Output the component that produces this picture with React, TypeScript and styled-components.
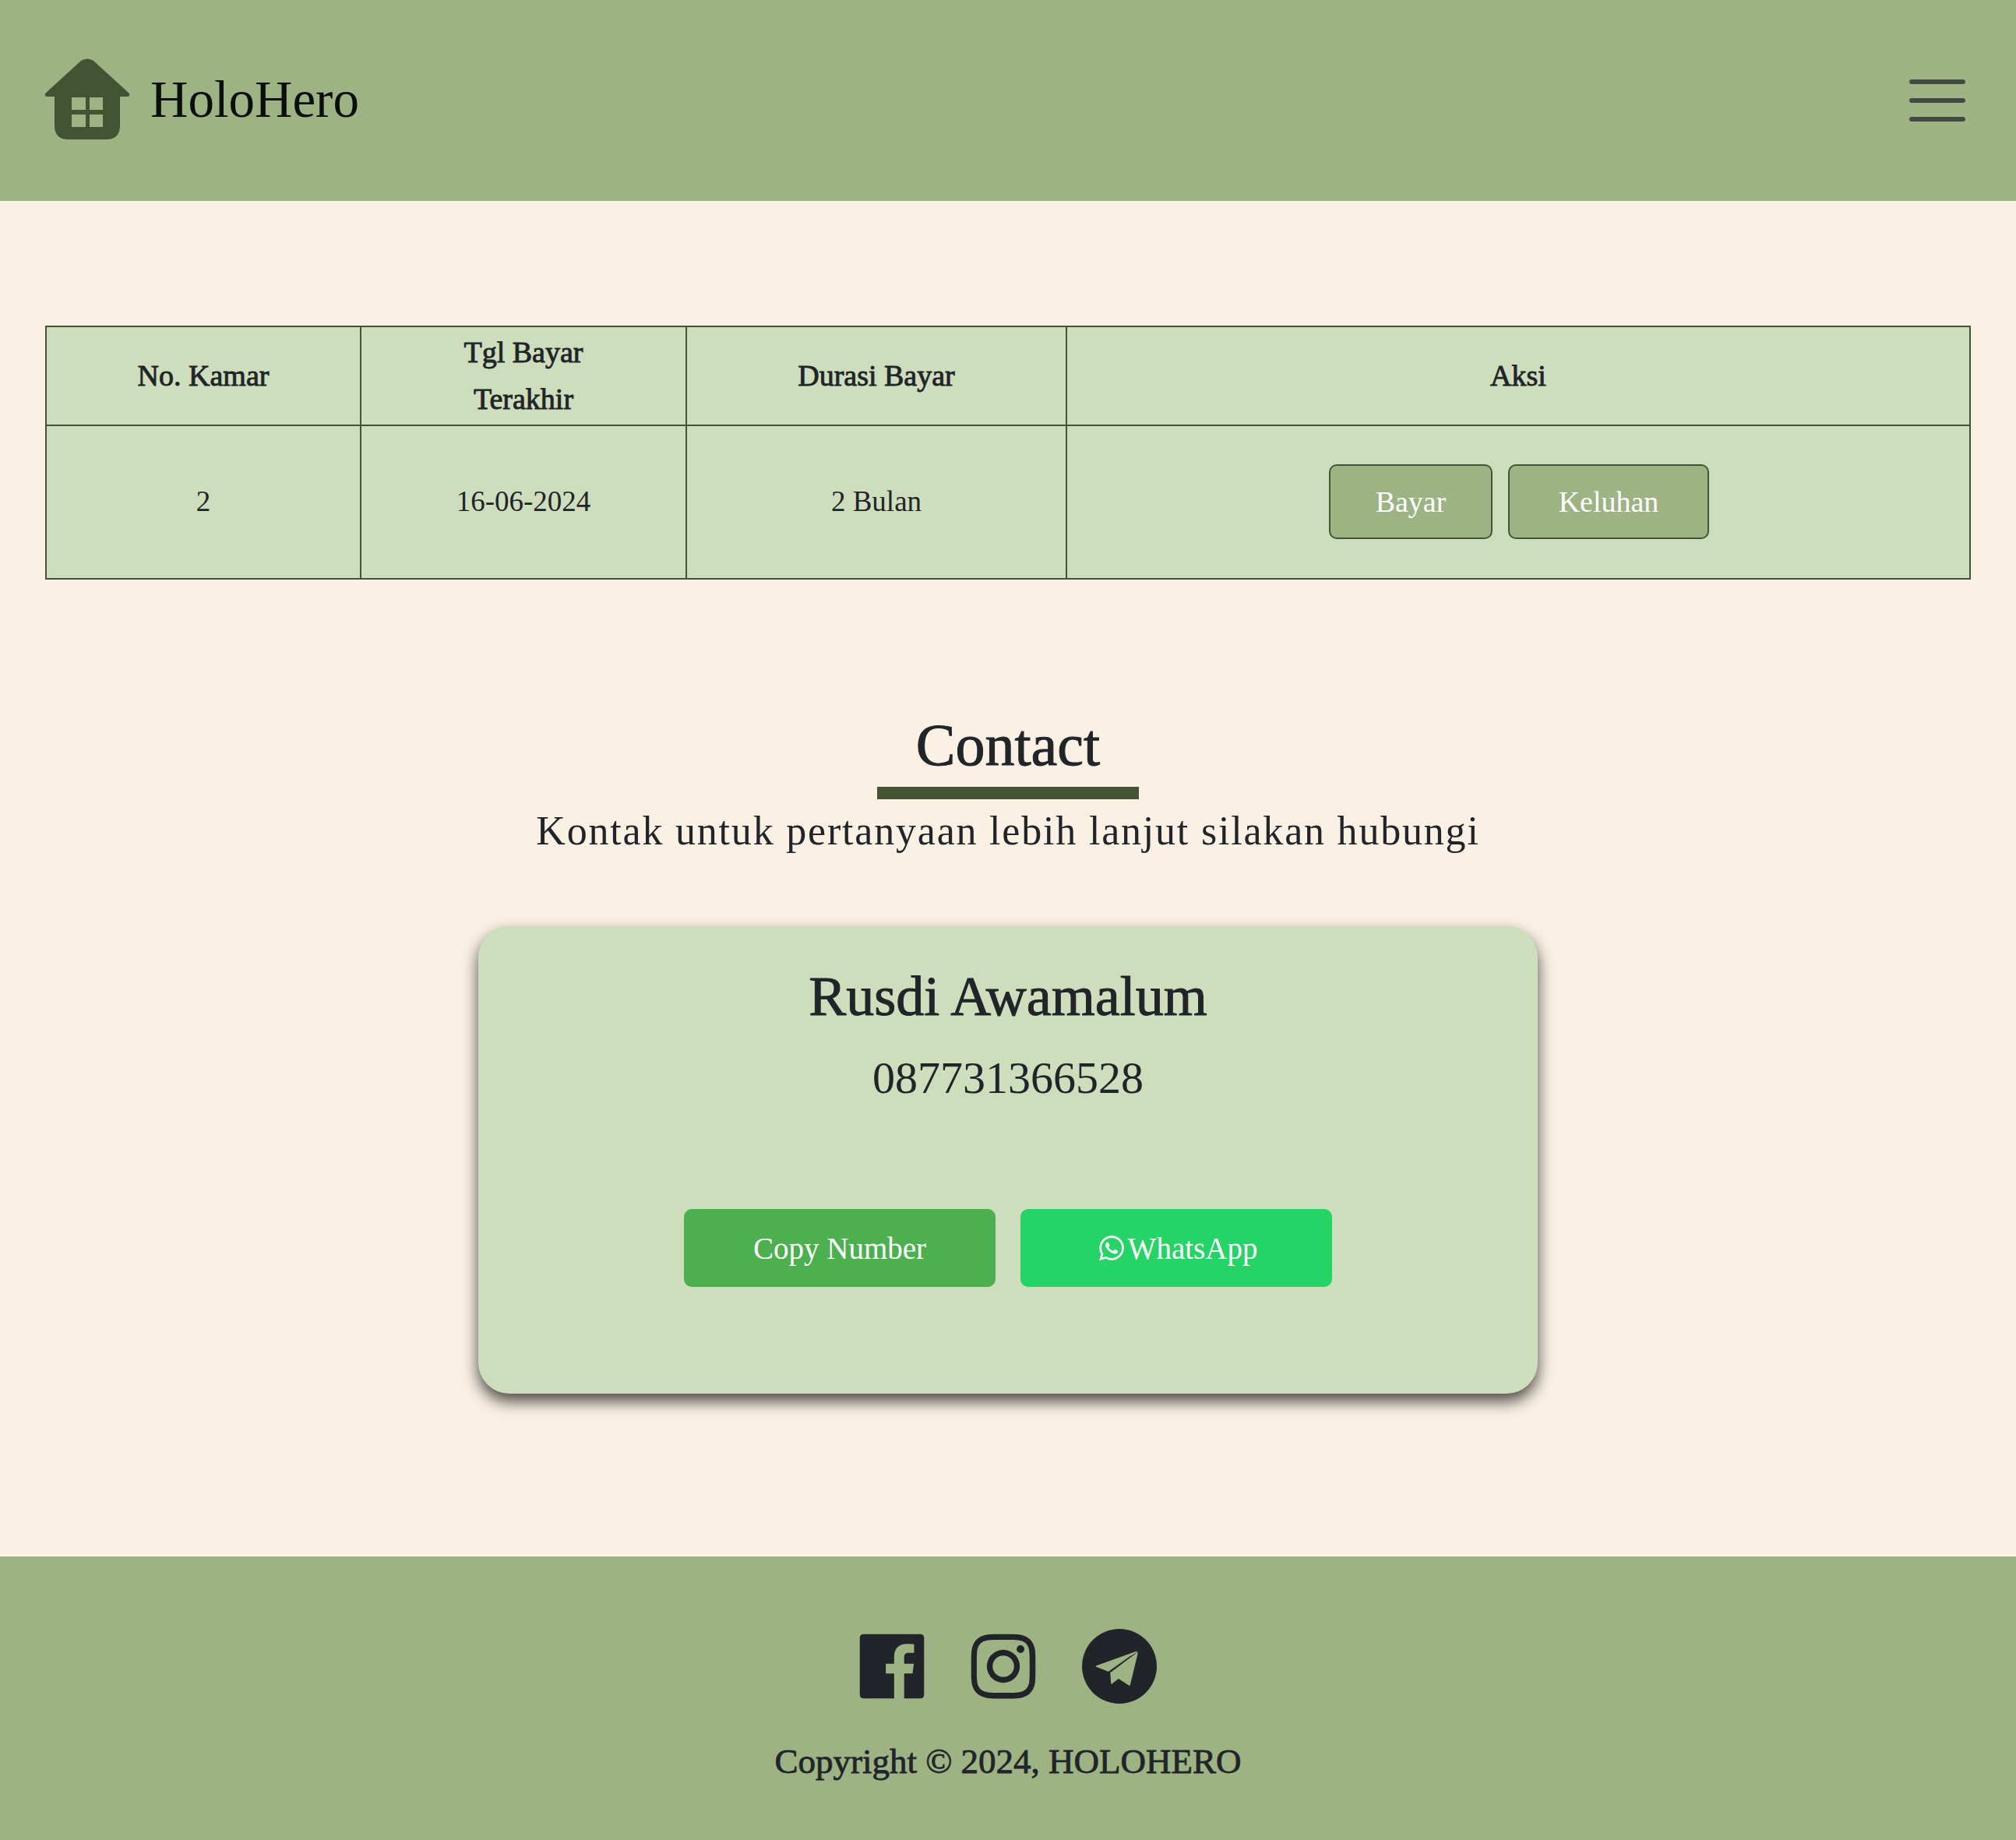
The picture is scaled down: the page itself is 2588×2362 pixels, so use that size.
import React from 'react';
import styled, { createGlobalStyle } from 'styled-components';
import { BiLogoFacebookSquare, BiLogoInstagram, BiLogoWhatsapp } from 'react-icons/bi';

const GlobalStyle = createGlobalStyle`
  html, body {
    margin: 0;
    padding: 0;
  }
  body {
    background: #faf1e4;
    color: #212529;
    font-family: "Liberation Serif", serif;
  }
`;

const Page = styled.div`
  display: flex;
  flex-direction: column;
  width: 2588px;
  height: 2362px;
`;

const Navbar = styled.header`
  display: flex;
  align-items: center;
  justify-content: space-between;
  height: 258px;
  padding: 0 65px 0 57px;
  background: #9eb384;
  box-sizing: border-box;
`;

const Brand = styled.div`
  display: flex;
  align-items: center;
  gap: 26px;
  margin-top: -4px;
  font-size: 67px;
  color: #0b0f0b;
`;

const Burger = styled.div`
  display: flex;
  flex-direction: column;
  gap: 18px;
  width: 72px;
`;

const BurgerLine = styled.span`
  display: block;
  height: 6px;
  border-radius: 3px;
  background: #414b43;
`;

const Main = styled.main`
  display: flex;
  flex-direction: column;
  align-items: center;
  flex: 1;
  padding: 160px 58px 0;
`;

const Table = styled.table`
  width: 2472px;
  border-collapse: collapse;
  table-layout: fixed;
  background: #cedebd;
  text-align: center;
`;

const HeadCell = styled.th`
  height: 123px;
  padding: 0 0 2px;
  border: 2px solid #435334;
  font-size: 38px;
  font-weight: 400;
  line-height: 60px;
  -webkit-text-stroke: 0.9px #212529;
`;

const BodyCell = styled.td`
  height: 193px;
  padding: 0 0 2px;
  border: 2px solid #435334;
  font-size: 37px;
`;

const ActionRow = styled.div`
  display: flex;
  justify-content: center;
  gap: 20px;
  padding-left: 2px;
`;

const ActionButton = styled.button<{ $width: number }>`
  width: ${(p) => p.$width}px;
  height: 96px;
  border: 2px solid #435334;
  border-radius: 10px;
  background: #9eb384;
  color: #fff;
  font-family: inherit;
  font-size: 38px;
`;

const Title = styled.h2`
  margin: 170px 0 0;
  font-size: 76px;
  font-weight: 400;
  line-height: 84px;
  -webkit-text-stroke: 1px #212529;
`;

const TitleBar = styled.div`
  width: 336px;
  height: 16px;
  margin-top: 12px;
  background: #435334;
`;

const Subtitle = styled.p`
  margin: 7px 0 0;
  font-size: 52px;
  line-height: 68px;
  letter-spacing: 1.8px;
`;

const Card = styled.section`
  display: flex;
  flex-direction: column;
  align-items: center;
  width: 1360px;
  height: 600px;
  margin-top: 88px;
  padding-top: 42px;
  border-radius: 40px;
  background: #cedebd;
  box-shadow: 0 10px 20px rgba(0, 0, 0, 0.7);
  box-sizing: border-box;
`;

const Name = styled.h3`
  margin: 0;
  font-size: 72px;
  font-weight: 400;
  line-height: 96px;
  -webkit-text-stroke: 1px #212529;
`;

const Phone = styled.p`
  margin: 15px 0 0;
  font-size: 58px;
  line-height: 84px;
`;

const CardActions = styled.div`
  display: flex;
  gap: 32px;
  margin-top: 126px;
`;

const ContactButton = styled.button<{ $color: string }>`
  display: flex;
  align-items: center;
  justify-content: center;
  width: 400px;
  height: 100px;
  border: 0;
  border-radius: 10px;
  background: ${(p) => p.$color};
  color: #fff;
  font-family: inherit;
  font-size: 39px;
`;

const Footer = styled.footer`
  display: flex;
  flex-direction: column;
  align-items: center;
  height: 364px;
  padding-top: 86px;
  background: #9eb384;
  box-sizing: border-box;
`;

const Socials = styled.div`
  display: flex;
  align-items: center;
  gap: 33px;
  padding-right: 14px;
  color: #212529;
`;

const TelegramMark = styled.svg`
  margin-left: 13px;
`;

const Copyright = styled.p`
  margin: 37px 0 0;
  font-size: 45px;
  font-weight: 400;
  line-height: 60px;
  -webkit-text-stroke: 0.8px #212529;
`;

const HouseLogo = () => (
  <svg width="110" height="104" viewBox="0 0 110 104" aria-hidden="true">
    <path
      fillRule="evenodd"
      fill="#435334"
      d="M47 3 Q55 -2 63 3 L108 44 Q111 48 107 49 L97 49 L97 86 Q97 104 79 104 L31 104 Q13 104 13 86 L13 49 L3 49 Q-1 48 2 44 Z M35 50 L35 66 L53 66 L53 50 Z M58 50 L58 66 L75 66 L75 50 Z M35 72 L35 88 L53 88 L53 72 Z M58 72 L58 88 L75 88 L75 72 Z"
    />
  </svg>
);

const TelegramLogo = () => (
  <TelegramMark width="96" height="96" viewBox="0 0 96 96" aria-hidden="true">
    <circle cx="48" cy="48" r="48" fill="#212529" />
    <g fill="#9eb384" stroke="#9eb384" strokeWidth="1.5" strokeLinejoin="round">
      <path d="M18.5 48 L70 29.5 L62 34 L34 54 Z" />
      <path d="M71 31 L61 72 L47 63 L38 70 L37 56.5 L63.5 36.5 Z" />
    </g>
  </TelegramMark>
);

const App: React.FC = () => {
  return (
    <Page>
      <GlobalStyle />
      <Navbar>
        <Brand>
          <HouseLogo />
          HoloHero
        </Brand>
        <Burger>
          <BurgerLine />
          <BurgerLine />
          <BurgerLine />
        </Burger>
      </Navbar>

      <Main>
        <Table>
          <colgroup>
            <col style={{ width: 404 }} />
            <col style={{ width: 418 }} />
            <col style={{ width: 488 }} />
            <col />
          </colgroup>
          <thead>
            <tr>
              <HeadCell>No. Kamar</HeadCell>
              <HeadCell>
                Tgl Bayar
                <br />
                Terakhir
              </HeadCell>
              <HeadCell>Durasi Bayar</HeadCell>
              <HeadCell>Aksi</HeadCell>
            </tr>
          </thead>
          <tbody>
            <tr>
              <BodyCell>2</BodyCell>
              <BodyCell>16-06-2024</BodyCell>
              <BodyCell>2 Bulan</BodyCell>
              <BodyCell>
                <ActionRow>
                  <ActionButton $width={210}>Bayar</ActionButton>
                  <ActionButton $width={258}>Keluhan</ActionButton>
                </ActionRow>
              </BodyCell>
            </tr>
          </tbody>
        </Table>

        <Title>Contact</Title>
        <TitleBar />
        <Subtitle>Kontak untuk pertanyaan lebih lanjut silakan hubungi</Subtitle>

        <Card>
          <Name>Rusdi Awamalum</Name>
          <Phone>087731366528</Phone>
          <CardActions>
            <ContactButton $color="#4caf50">Copy Number</ContactButton>
            <ContactButton $color="#25d366">
              <BiLogoWhatsapp size={42} />
              WhatsApp
            </ContactButton>
          </CardActions>
        </Card>
      </Main>

      <Footer>
        <Socials>
          <BiLogoFacebookSquare size={110} />
          <BiLogoInstagram size={110} />
          <TelegramLogo />
        </Socials>
        <Copyright>Copyright © 2024, HOLOHERO</Copyright>
      </Footer>
    </Page>
  );
};

export default App;
